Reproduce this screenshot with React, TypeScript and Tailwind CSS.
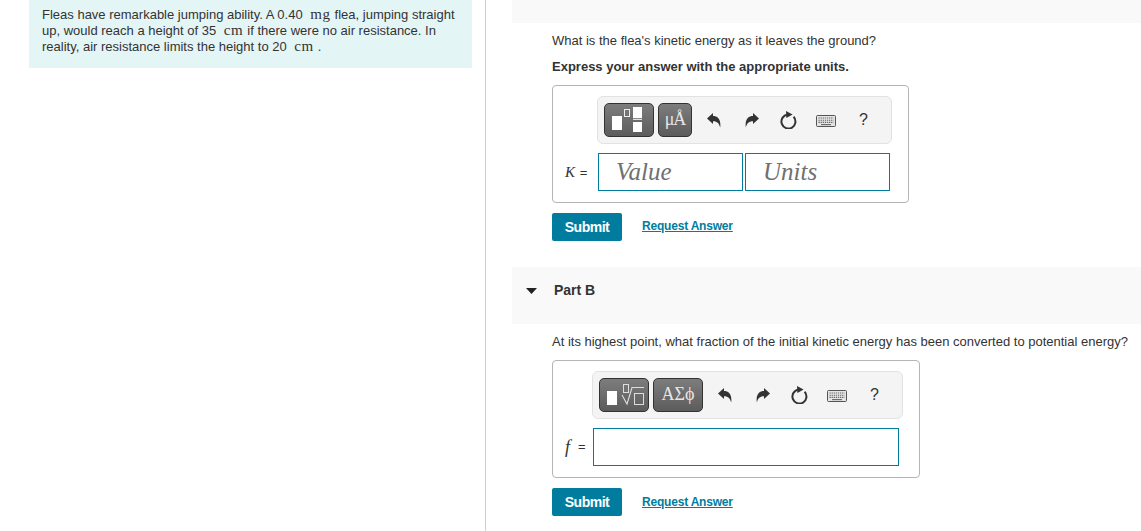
import React from "react";

const Undo = () => (
  <svg width="14" height="15" viewBox="0 0 14 15" className="block">
    <path d="M0 5.5 L6 0 V3 C10.5 3 14.2 6 13.2 14.5 C12.2 10.5 10.5 8.2 6 8.2 V11 Z" fill="#333" />
  </svg>
);
const Redo = () => (
  <svg width="14" height="15" viewBox="0 0 14 15" className="block">
    <path d="M14 5.5 L8 0 V3 C3.5 3 -0.2 6 0.8 14.5 C1.8 10.5 3.5 8.2 8 8.2 V11 Z" fill="#333" />
  </svg>
);
const Reset = () => (
  <svg width="17" height="18" viewBox="0 0 17 18" className="block">
    <path d="M7.5 3.6 A7 7 0 1 0 13.6 5.8" fill="none" stroke="#333" strokeWidth="2" />
    <path d="M6 0 L12.6 3.4 L6.4 7 Z" fill="#333" />
  </svg>
);
const Keyboard = () => (
  <svg width="20" height="12" viewBox="0 0 20 12" className="block">
    <rect x="0.5" y="0.5" width="19" height="11" rx="1" fill="#e4e4e4" stroke="#555" />
    <path d="M2.5 3 H17.5 M2.5 5.2 H17.5 M2.5 7.4 H17.5" stroke="#666" strokeWidth="1.1" strokeDasharray="1.3 0.8" />
    <path d="M5 9.6 H15" stroke="#666" strokeWidth="1.1" />
  </svg>
);

const btn =
  "flex h-[34px] items-center justify-center rounded-[5px] border border-[#333] bg-gradient-to-b from-[#7d7d7d] to-[#5c5c5c]";

const TemplatesA = () => (
  <svg width="34" height="30" viewBox="0 0 34 30" className="block">
    <rect x="0" y="11" width="10" height="14" fill="#fff" />
    <rect x="12.5" y="4.5" width="5" height="7" fill="none" stroke="#eee" />
    <rect x="21" y="2" width="9" height="11" fill="#fff" />
    <rect x="21" y="13.8" width="9" height="1" fill="#fff" />
    <rect x="21" y="17" width="9" height="10" fill="#fff" />
  </svg>
);

const TemplatesB = () => (
  <svg width="40" height="30" viewBox="0 0 40 30" className="block">
    <rect x="3" y="11" width="10" height="14" fill="#fff" />
    <rect x="19.5" y="4.5" width="5" height="8" fill="none" stroke="#ddd" />
    <path d="M18 15 L23 24 L28 7.5 H40" fill="none" stroke="#ddd" strokeWidth="1.1" />
    <rect x="30.5" y="13.5" width="9" height="11" fill="none" stroke="#ddd" />
  </svg>
);

function Toolbar({
  first,
  second,
  firstW,
  secondW,
  className,
}: {
  first: React.ReactNode;
  second: string;
  firstW: string;
  secondW: string;
  className: string;
}) {
  return (
    <div className={`flex h-[48px] items-center rounded-[6px] border border-[#e2e2e2] bg-[#f4f4f4] pl-[6px] ${className}`}>
      <div className={`${btn} ${firstW}`}>{first}</div>
      <div className={`${btn} ${secondW} ml-[4px] pb-[1px] font-['Liberation_Serif',serif] text-[#e6e6e6] ${second === "μÅ" ? "text-[18px] tracking-[-1px]" : "text-[18px]"}`}>
        {second}
      </div>
      <div className="ml-[15px] flex items-center">
        <Undo />
        <span className="ml-[24px]">
          <Redo />
        </span>
        <span className="ml-[21px]">
          <Reset />
        </span>
        <span className="ml-[19px] mt-[2px]">
          <Keyboard />
        </span>
        <span className="ml-[23px] text-[16px] leading-none text-[#333]">?</span>
      </div>
    </div>
  );
}

function Actions({ linkTop }: { linkTop: string }) {
  return (
    <div className="mt-[10px] flex items-start">
      <button className="h-[28px] w-[70px] rounded-[2px] bg-[#007C9E] text-[14px] font-bold tracking-[-0.5px] text-white">
        Submit
      </button>
      <a className={`ml-[20px] ${linkTop} text-[12px] font-bold leading-[16px] tracking-[-0.2px] text-[#007C9E] underline`}>
        Request Answer
      </a>
    </div>
  );
}

const Unit = ({ children }: { children: string }) => (
  <span className="mx-[4px] font-['Liberation_Serif',serif] text-[15px] leading-[0] tracking-[0.6px] text-[#333]">{children}</span>
);

export default function App() {
  return (
    <div className="flex h-[531px] w-[1141px] overflow-hidden bg-white font-['Liberation_Sans',sans-serif] text-[13px] text-[#333]">
      <div className="h-full w-[486px] shrink-0 border-r border-[#c3d0e2] pl-[29px] pr-[13px]">
        <div className="h-[68px] bg-[#e4f5f6] pl-[13px] pr-[14px] pt-[7px] text-[13px] leading-[16px]">
          Fleas have remarkable jumping ability. A 0.40 <Unit>mg</Unit>flea, jumping straight up, would reach a height of 35 <Unit>cm</Unit>if there were no air resistance. In reality, air resistance limits the height to 20 <Unit>cm</Unit>.
        </div>
      </div>

      <div className="min-w-0 flex-1 pl-[26px]">
        <div className="h-[23px] bg-[#f9f9f9]" />
        <div className="pl-[40px]">
          <p className="mt-[10px] text-[13px] leading-[16px]">What is the flea's kinetic energy as it leaves the ground?</p>
          <p className="mt-[10px] text-[13px] font-bold leading-[16px]">Express your answer with the appropriate units.</p>

          <div className="mt-[10px] h-[118px] w-[357px] rounded-[4px] border border-[#b5b5b5] pl-[11px] pt-[10px]">
            <Toolbar
              className="ml-[33px] w-[295px]"
              first={<TemplatesA />}
              second="μÅ"
              firstW="w-[50px]"
              secondW="w-[34px]"
            />
            <div className="mt-[9px] flex items-center">
              <span className="w-[34px] pl-[1px] text-[13px]">
                <i className="mr-[1px] font-['Liberation_Serif',serif] text-[15px]">K</i> =
              </span>
              <div className="flex h-[38px] w-[145px] items-center border border-[#007C9E] pl-[17px] font-['Liberation_Serif',serif] text-[25px] italic text-[#707070]">
                Value
              </div>
              <div className="ml-[2px] flex h-[38px] w-[145px] items-center border border-[#007C9E] pl-[17px] font-['Liberation_Serif',serif] text-[25px] italic text-[#707070]">
                Units
              </div>
            </div>
          </div>

          <Actions linkTop="mt-[5px]" />
        </div>

        <div className="mt-[26px] flex h-[57px] items-start bg-[#f9f9f9] pl-[14px] pt-[15px]">
          <svg width="11" height="6" viewBox="0 0 11 6" className="mt-[6px] block">
            <path d="M0 0 H11 L5.5 6 Z" fill="#222" />
          </svg>
          <span className="ml-[17px] text-[14px] font-bold leading-[16px]">Part B</span>
        </div>

        <div className="pl-[40px]">
          <p className="mt-[10px] whitespace-nowrap text-[13px] leading-[16px]">
            At its highest point, what fraction of the initial kinetic energy has been converted to potential energy?
          </p>
          <div className="mt-[10px] h-[118px] w-[368px] rounded-[4px] border border-[#b5b5b5] pl-[11px] pt-[10px]">
            <Toolbar
              className="ml-[28px] w-[311px]"
              first={<TemplatesB />}
              second="ΑΣϕ"
              firstW="w-[50px]"
              secondW="w-[50px]"
            />
            <div className="mt-[9px] flex items-center">
              <span className="flex w-[29px] items-center pl-[1px] text-[13px]">
                <i className="inline-block w-[13px] font-['Liberation_Serif',serif] text-[18px] leading-none">f</i>=
              </span>
              <div className="h-[38px] w-[306px] border border-[#007C9E]" />
            </div>
          </div>
          <Actions linkTop="mt-[6px]" />
        </div>
      </div>
    </div>
  );
}
